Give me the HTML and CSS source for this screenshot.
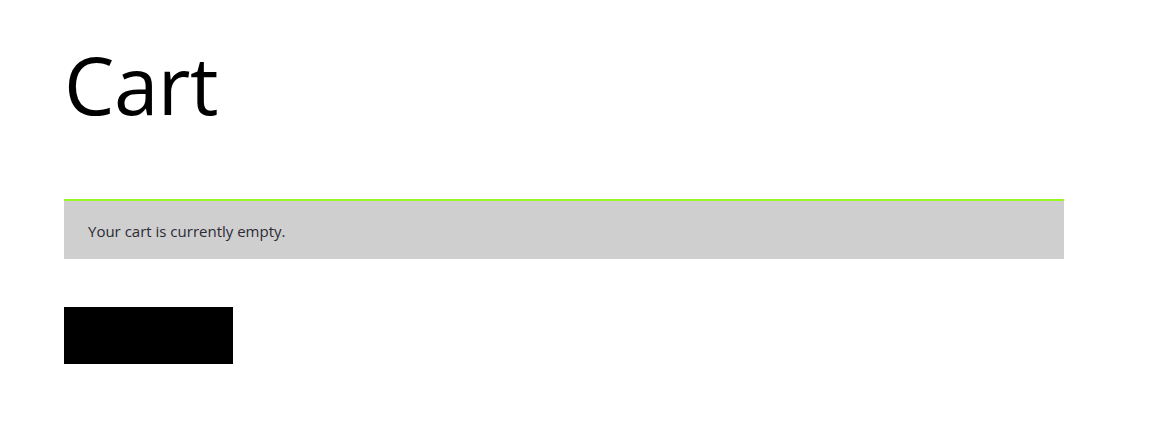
FILE: index.html
```html
<!DOCTYPE html>
<html>
<head>
<meta charset="utf-8">
<link rel="stylesheet" href="styles.css">
</head>
<body>
<main class="page">
  <h1 class="title">Cart</h1>
  <div class="notice">Your cart is currently empty.</div>
  <a class="btn" href="#"></a>
</main>
</body>
</html>
```
FILE: styles.css
```css
html, body { margin: 0; padding: 0; background: #fff; }
body { font-family: "Open Sans", "Noto Sans", sans-serif; color: #000; }
.page { width: 1000px; padding: 0 0 0 64px; }
.title {
  margin: 0;
  padding-top: 29px;
  font-size: 80px;
  font-weight: 400;
  line-height: 110px;
  letter-spacing: -0.5px;
}
.notice {
  margin-top: 60px;
  border-top: 2px solid #9cf526;
  background: #cfcfcf;
  height: 60px;
  box-sizing: border-box;
  padding: 0 24px;
  display: flex;
  align-items: center;
  font-size: 15px;
  color: #2b2b35;
  padding-top: 1px;
}
.btn {
  display: block;
  margin-top: 48px;
  width: 169px;
  height: 57px;
  background: #000;
}
```
